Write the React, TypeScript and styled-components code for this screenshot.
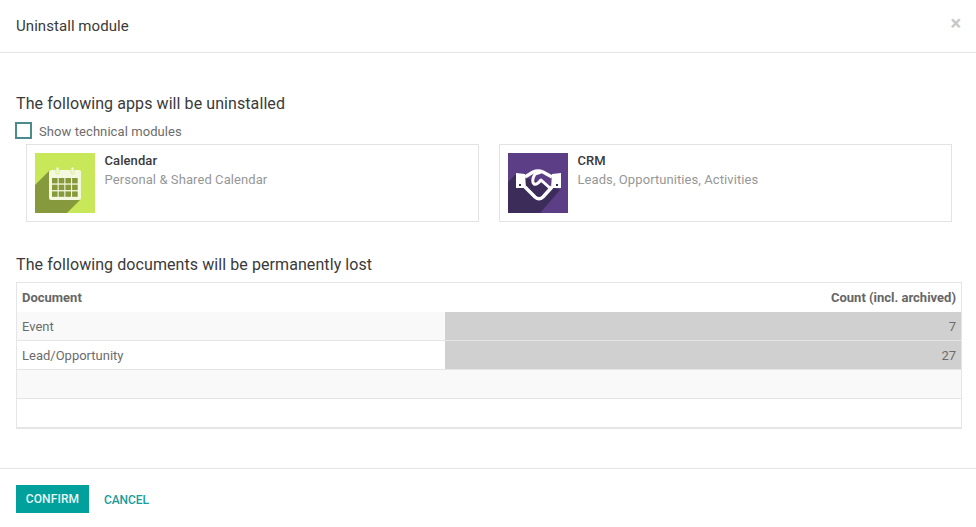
import React from 'react';
import styled, { createGlobalStyle } from 'styled-components';

const GlobalStyle = createGlobalStyle`
  html, body {
    margin: 0;
    padding: 0;
    background: #fff;
    font-family: Roboto, "Noto Sans", sans-serif;
    font-size: 13px;
    color: #4c4c4c;
  }
`;

const Dialog = styled.div`
  width: 976px;
  height: 527px;
  display: flex;
  flex-direction: column;
  overflow: hidden;
`;
const Header = styled.div`
  flex: none;
  height: 52px;
  border-bottom: 1px solid #e5e5e5;
  padding: 0 16px;
  display: flex;
  justify-content: space-between;
  align-items: center;
`;
const Title = styled.div`
  font-size: 15px;
  letter-spacing: 0.06px;
  color: #3a3a3a;
`;
const Close = styled.div`
  font-size: 20px;
  font-weight: bold;
  color: #c8c8c8;
  margin: -6px -1px 0 0;
`;
const Body = styled.div`
  flex: none;
  height: 415px;
  padding: 40px 15px 0 16px;
  box-sizing: border-box;
`;
const Heading = styled.div`
  font-size: 16px;
  line-height: 22px;
  letter-spacing: 0.08px;
  color: #3a3a3a;
`;
const CheckRow = styled.label`
  display: flex;
  align-items: center;
  gap: 7px;
  margin-top: 8px;
  height: 16px;
  margin-left: -1px;
  letter-spacing: 0.08px;
  color: #6c6c6c;
`;
const CheckBox = styled.span`
  width: 17px;
  height: 17px;
  box-sizing: border-box;
  border: 2px solid #4a8c8e;
  flex: none;
  position: relative;
  top: -1px;
`;
const Cards = styled.div`
  display: grid;
  grid-template-columns: 453px 453px;
  column-gap: 20px;
  margin: 5px 0 0 10px;
`;
const Card = styled.div`
  height: 78px;
  box-sizing: border-box;
  border: 1px solid #e3e3e3;
  padding: 8px;
  display: flex;
  gap: 9.5px;
`;
const CardIcon = styled.svg`
  width: 60px;
  height: 60px;
  flex: none;
  display: block;
`;
const CardName = styled.div`
  font-weight: 500;
  color: #3a3a3a;
  line-height: 15px;
  letter-spacing: 0.08px;
`;
const CardSummary = styled.div`
  color: #979797;
  line-height: 15px;
  margin-top: 4px;
  letter-spacing: 0.08px;
`;
const LostHeading = styled(Heading)`
  margin-top: 32px;
`;
const Table = styled.div`
  margin-top: 6px;
  width: 946px;
  box-sizing: border-box;
  border: 1px solid #e5e5e5;
  border-bottom-width: 2px;
`;
const Row = styled.div<{ $odd?: boolean }>`
  height: 29px;
  box-sizing: border-box;
  display: flex;
  position: relative;
  align-items: center;
  justify-content: space-between;
  padding: 1px 5px 0;
  background: ${p => (p.$odd ? '#f9f9f9' : '#fff')};
  border-bottom: 1px solid #e5e5e5;
  &:last-child {
    border-bottom: none;
    height: 28px;
  }
`;
const HeadRow = styled(Row)`
  padding-top: 0;
  font-weight: 700;
  color: #666;
  border-bottom: none;
`;
const Cell = styled.span`
  position: relative;
  color: #6c6c6c;
`;
const Bar = styled.div`
  position: absolute;
  top: 0;
  bottom: 0;
  right: 0;
  background: #d0d0d0;
`;
const Footer = styled.div`
  flex: none;
  border-top: 1px solid #e5e5e5;
  padding: 16px;
  display: flex;
  align-items: center;
`;
const Confirm = styled.button`
  width: 73px;
  height: 28px;
  border: none;
  padding: 0;
  background: #00a09d;
  color: #e6f6f5;
  font: 500 12px Roboto, sans-serif;
  letter-spacing: 0.1px;
  text-transform: uppercase;
`;
const Cancel = styled.button`
  border: none;
  background: none;
  padding: 1px 0 0;
  margin-left: 15px;
  color: #1a9c9a;
  font: 500 12px Roboto, sans-serif;
  letter-spacing: -0.1px;
  text-transform: uppercase;
`;

const CalendarIcon = () => (
  <CardIcon viewBox="0 0 60 60">
    <rect width="60" height="60" fill="#c8e85a" />
    <path d="M0 32 L15 17 L45 47 L32 60 L0 60 Z" fill="#86993c" />
    <path d="M16 17 L44 17 Q46 17 46 19 L46 45 Q46 47 44 47 L16 47 Q14 47 14 45 L14 19 Q14 17 16 17 Z" fill="#f4f8df" />
    <rect x="21" y="14" width="3" height="7" rx="1.5" fill="#f4f8df" stroke="#c8e85a" strokeWidth="0.6" />
    <rect x="36" y="14" width="3" height="7" rx="1.5" fill="#f4f8df" stroke="#c8e85a" strokeWidth="0.6" />
    {[25, 31.7, 38.4].map(y =>
      [17, 23.7, 30.4, 37.1].map(x => (
        <rect key={`${x}-${y}`} x={x} y={y} width="5.6" height="5.4" fill="#86993c" />
      ))
    )}
  </CardIcon>
);

const CrmIcon = () => (
  <CardIcon viewBox="0 0 60 60">
    <rect width="60" height="60" fill="#5b3e85" />
    <path d="M0 29 L8 21 L52 37 L32 60 L0 60 Z" fill="#3b2c5a" />
    <path d="M8 20 L17 21 L18 35 L8 35 Z" fill="#fff" />
    <path d="M53 20 L44 21 L43 35 L53 35 Z" fill="#fff" />
    <path d="M17 24 L25 19 Q30 17 35 19 L44 24" fill="none" stroke="#fff" strokeWidth="3.4" />
    <path d="M17 34 L27 44 Q31 47.5 35 44 L44 34" fill="none" stroke="#fff" strokeWidth="3.4" />
    <path d="M33 19 L27 21 Q23 28 26 31 Q29 32 33 27 L43 36" fill="none" stroke="#fff" strokeWidth="3" strokeLinejoin="round" />
    <rect x="11" y="31" width="2" height="2" fill="#3b2c5a" />
    <rect x="48" y="31" width="2" height="2" fill="#3b2c5a" />
  </CardIcon>
);

const App: React.FC = () => {
  return (
    <>
      <GlobalStyle />
      <Dialog>
        <Header>
          <Title>Uninstall module</Title>
          <Close>×</Close>
        </Header>
        <Body>
          <Heading>The following apps will be uninstalled</Heading>
          <CheckRow>
            <CheckBox />
            Show technical modules
          </CheckRow>
          <Cards>
            <Card>
              <CalendarIcon />
              <div>
                <CardName>Calendar</CardName>
                <CardSummary>Personal &amp; Shared Calendar</CardSummary>
              </div>
            </Card>
            <Card>
              <CrmIcon />
              <div>
                <CardName>CRM</CardName>
                <CardSummary>Leads, Opportunities, Activities</CardSummary>
              </div>
            </Card>
          </Cards>
          <LostHeading>The following documents will be permanently lost</LostHeading>
          <Table>
            <HeadRow>
              <span>Document</span>
              <span>Count (incl. archived)</span>
            </HeadRow>
            <Row $odd>
              <Bar style={{ width: 516 }} />
              <Cell>Event</Cell>
              <Cell>7</Cell>
            </Row>
            <Row>
              <Bar style={{ width: 516 }} />
              <Cell>Lead/Opportunity</Cell>
              <Cell>27</Cell>
            </Row>
            <Row $odd />
            <Row />
          </Table>
        </Body>
        <Footer>
          <Confirm>Confirm</Confirm>
          <Cancel>Cancel</Cancel>
        </Footer>
      </Dialog>
    </>
  );
};

export default App;
